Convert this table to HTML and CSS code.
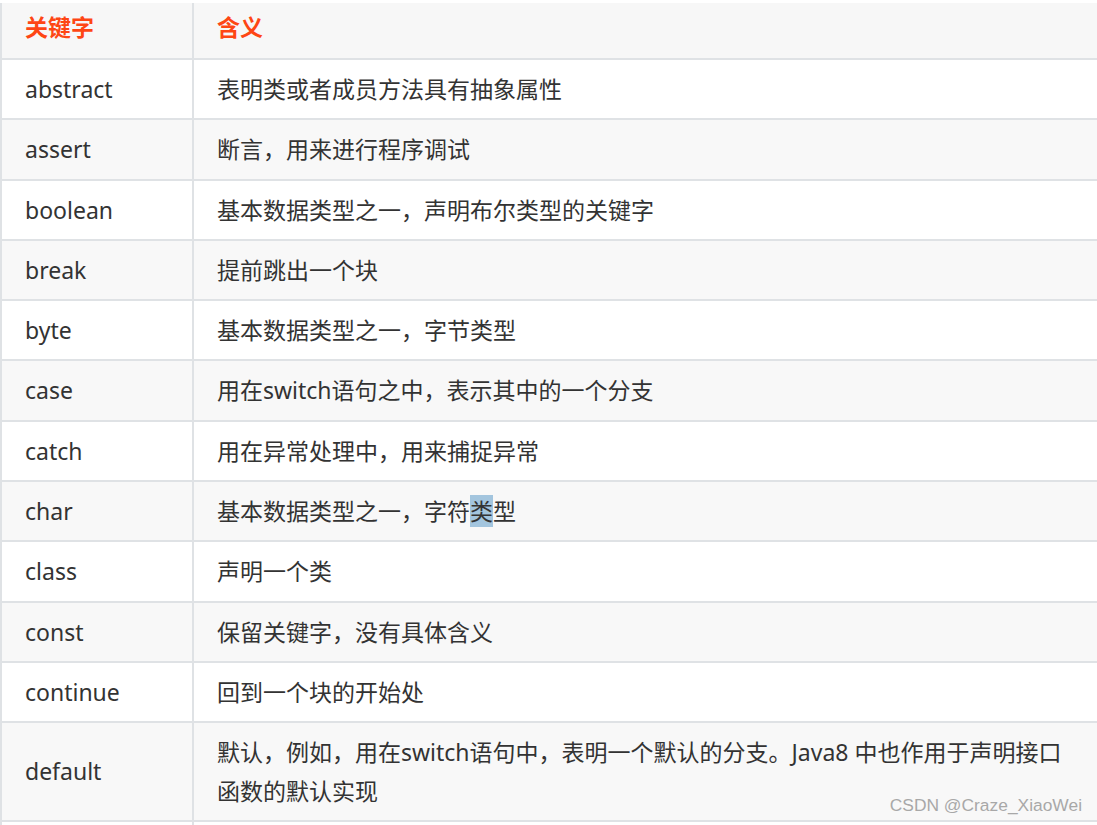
FILE: index.html
```html
<!DOCTYPE html>
<html lang="zh">
<head>
<meta charset="utf-8">
<title>Java 关键字</title>
<link rel="stylesheet" href="styles.css">
</head>
<body>
<div class="page">
  <table class="kw-table">
    <thead>
      <tr><th class="c1">关键字</th><th class="c2">含义</th></tr>
    </thead>
    <tbody>
      <tr><td>abstract</td><td>表明类或者成员方法具有抽象属性</td></tr>
      <tr><td>assert</td><td>断言，用来进行程序调试</td></tr>
      <tr><td>boolean</td><td>基本数据类型之一，声明布尔类型的关键字</td></tr>
      <tr><td>break</td><td>提前跳出一个块</td></tr>
      <tr><td>byte</td><td>基本数据类型之一，字节类型</td></tr>
      <tr><td>case</td><td>用在switch语句之中，表示其中的一个分支</td></tr>
      <tr><td>catch</td><td>用在异常处理中，用来捕捉异常</td></tr>
      <tr><td>char</td><td>基本数据类型之一，字符<span class="sel">类</span>型</td></tr>
      <tr><td>class</td><td>声明一个类</td></tr>
      <tr><td>const</td><td>保留关键字，没有具体含义</td></tr>
      <tr><td>continue</td><td>回到一个块的开始处</td></tr>
      <tr><td>default</td><td>默认，例如，用在switch语句中，表明一个默认的分支。Java8 中也作用于声明接口函数的默认实现</td></tr>
      <tr class="empty"><td></td><td></td></tr>
    </tbody>
  </table>
  <div class="watermark">CSDN @Craze_XiaoWei</div>
</div>
</body>
</html>
```
FILE: styles.css
```css
html, body {
  margin: 0;
  padding: 0;
  background: #ffffff;
  overflow: hidden;
}
.page {
  position: relative;
  width: 1097px;
  height: 825px;
  overflow: hidden;
  padding-top: 3px;
  box-sizing: border-box;
}
.kw-table {
  border-collapse: separate;
  border-spacing: 0;
  border-left: 2px solid #dfe2e5;
  font-family: "Noto Sans", "Noto Sans CJK SC", sans-serif;
  font-size: 23px;
  color: #333333;
  width: 1102px;
  table-layout: fixed;
}
.kw-table th,
.kw-table td {
  text-align: left;
  vertical-align: middle;
  border-right: 2px solid #dfe2e5;
  border-bottom: 2px solid #dfe2e5;
  padding: 10px 23px;
  line-height: 38.3px;
}
.kw-table th {
  font-weight: 700;
  color: #fe4614;
  background: #f7f7f7;
  padding-top: 5px;
  padding-bottom: 11.7px;
}
.kw-table .c1 {
  width: 144px;
}
.kw-table tbody tr:nth-child(even) td {
  background: #f8f8f8;
}
.kw-table tr.empty td {
  height: 40px;
}
.sel {
  background: #a3c5de;
}
.watermark {
  position: absolute;
  right: 15px;
  top: 794px;
  font-family: "Liberation Sans", Arial, sans-serif;
  font-size: 17.4px;
  color: #a8a8a8;
  line-height: 22px;
}
```
